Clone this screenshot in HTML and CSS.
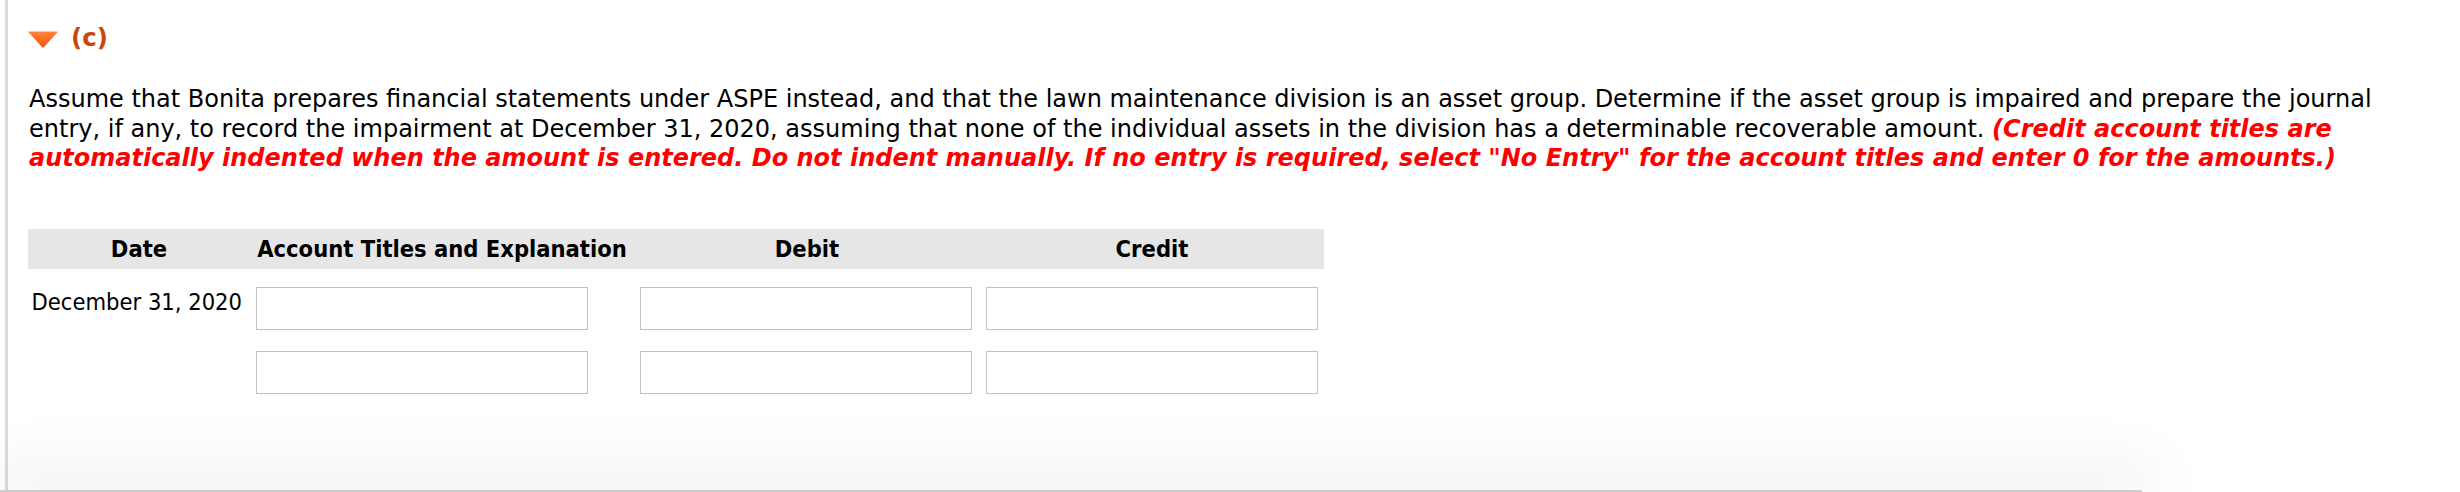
FILE: index.html
```html
<!DOCTYPE html>
<html lang="en">
<head>
<meta charset="utf-8">
<title>Part (c)</title>
<link rel="stylesheet" href="styles.css">
</head>
<body>
<div class="page">
  <div class="part-head">
    <svg class="caret" width="30" height="17" viewBox="0 0 30 17" aria-hidden="true">
      <defs>
        <linearGradient id="cg" x1="0" y1="0" x2="0" y2="1">
          <stop offset="0" stop-color="#ff8443"/>
          <stop offset="0.5" stop-color="#ff6a22"/>
          <stop offset="1" stop-color="#ea5410"/>
        </linearGradient>
      </defs>
      <path d="M1 0.5 H29 Q30 0.5 29.3 1.5 L15.8 16.2 Q15 17 14.2 16.2 L0.7 1.5 Q0 0.5 1 0.5 Z" fill="url(#cg)"/>
    </svg>
    <span class="part-label">(c)</span>
  </div>

  <p class="question">Assume that Bonita prepares financial statements under ASPE instead, and that the lawn maintenance division is an asset group. Determine if the asset group is impaired and prepare the journal entry, if any, to record the impairment at December 31, 2020, assuming that none of the individual assets in the division has a determinable recoverable amount. <strong class="note">(Credit account titles are automatically indented when the amount is entered. Do not indent manually. If no entry is required, select "No Entry" for the account titles and enter 0 for the amounts.)</strong></p>

  <div class="journal">
    <div class="jrow jhead">
      <div class="cell c-date">Date</div>
      <div class="cell c-acct">Account Titles and Explanation</div>
      <div class="cell c-amt">Debit</div>
      <div class="cell c-amt">Credit</div>
    </div>
    <div class="jrow">
      <div class="cell c-date date-text">December 31, 2020</div>
      <div class="cell c-input"><input class="field" type="text"></div>
      <div class="cell c-input"><input class="field" type="text"></div>
      <div class="cell c-input"><input class="field" type="text"></div>
    </div>
    <div class="jrow">
      <div class="cell c-date date-text"></div>
      <div class="cell c-input"><input class="field" type="text"></div>
      <div class="cell c-input"><input class="field" type="text"></div>
      <div class="cell c-input"><input class="field" type="text"></div>
    </div>
  </div>
</div>
<div class="next-shadow"></div>
</body>
</html>
```

FILE: styles.css
```css
html, body {
  margin: 0;
  padding: 0;
  background: #ffffff;
  overflow: hidden;
}

body {
  width: 2460px;
  height: 492px;
  font-family: "DejaVu Sans", Verdana, sans-serif;
  color: #000;
}

.page {
  box-sizing: border-box;
  height: 490px;
  margin-left: 5px;
  border-left: 3px solid #d4dce8;
  padding: 26px 40px 0 20px;
}

.part-head {
  display: flex;
  align-items: center;
  height: 24px;
  gap: 13px;
}

.caret {
  display: block;
  flex: none;
  margin-top: 2px;
}

.part-label {
  font-family: "DejaVu Sans", Verdana, sans-serif;
  font-weight: bold;
  font-size: 24.5px;
  color: #c9470f;
  line-height: 24px;
}

.question {
  margin: 35px 0 0 1px;
  font-size: 24px;
  line-height: 29.5px;
}

.note {
  color: #ff0000;
  font-style: italic;
  font-weight: bold;
}

.journal {
  margin-top: 55px;
  display: flex;
  flex-direction: column;
  gap: 21px;
  width: 1296px;
}

.jrow {
  display: grid;
  grid-template-columns: 222px 384px 346px 344px;
  height: 43px;
}

.jrow.jhead {
  height: 40px;
  background: #e6e6e6;
  margin-bottom: -3px;
}

.cell {
  box-sizing: border-box;
}

.jhead .cell {
  display: flex;
  align-items: center;
  justify-content: center;
  font-family: "DejaVu Sans Condensed", Tahoma, sans-serif;
  font-weight: bold;
  font-size: 23.5px;
  white-space: nowrap;
}

.date-text {
  font-family: "DejaVu Sans Condensed", Tahoma, sans-serif;
  font-size: 23.5px;
  white-space: nowrap;
  text-align: right;
  padding: 2px 8px 0 0;
  line-height: 27px;
}

.c-input {
  padding-left: 6px;
}

.field {
  box-sizing: border-box;
  display: block;
  width: 332px;
  height: 43px;
  margin: 0;
  padding: 0 8px;
  border: 1px solid #c0c0c0;
  border-radius: 0;
  background: #fff;
  font-family: "DejaVu Sans", Verdana, sans-serif;
  font-size: 20px;
}

.next-shadow {
  width: 2142px;
  height: 2px;
  background: #cdcdcd;
  box-shadow: 0 -10px 60px 16px rgba(0, 0, 0, 0.065);
}
```
